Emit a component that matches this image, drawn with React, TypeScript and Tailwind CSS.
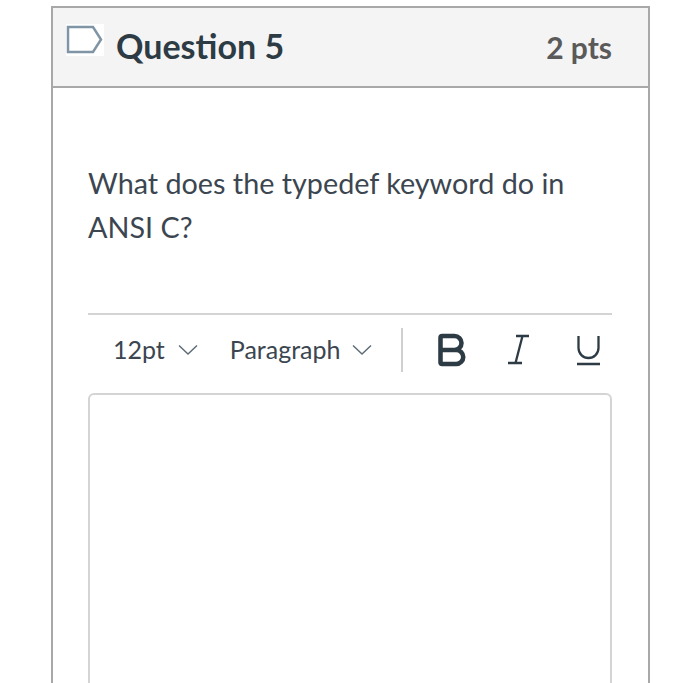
import { Bold } from "lucide-react";

function FlagIcon() {
  return (
    <svg width="38" height="32" viewBox="0 0 38 32" className="shrink-0 bg-white">
      <path
        d="M2 3H27L35 15.5L27 28H2Z"
        fill="#fff"
        stroke="#7f95a6"
        strokeWidth="2.5"
      />
    </svg>
  );
}

function Chevron() {
  return (
    <svg width="20" height="12" viewBox="0 0 20 12" className="shrink-0">
      <path d="M1 1.5L10 10L19 1.5" fill="none" stroke="#5c6a75" strokeWidth="1.4" />
    </svg>
  );
}

function ItalicIcon() {
  return (
    <svg width="24" height="32" viewBox="0 0 24 32" className="shrink-0">
      <path d="M9 2H22M15.5 2L8.5 29M1 29H15" fill="none" stroke="#2d3b45" strokeWidth="2.3" />
    </svg>
  );
}

function UnderlineIcon() {
  return (
    <svg width="25" height="32" viewBox="0 0 25 32" className="shrink-0">
      <path
        d="M2.5 2V14A10 10 0 0 0 22.5 14V2M1 30H24"
        fill="none"
        stroke="#2d3b45"
        strokeWidth="2.3"
      />
    </svg>
  );
}

export default function App() {
  return (
    <div className="h-[683px] overflow-hidden bg-white pt-[6px] pl-[51px] font-['Lato',sans-serif]">
      <div className="w-[599px] h-[700px] border-2 border-b-0 border-[#a8a8a8]">
        {/* Question header */}
        <div className="h-[80px] flex items-center bg-[#f4f4f4] border-b-2 border-[#a8a8a8] pl-[13px] pr-[36px]">
          <div className="-mt-[14px]">
            <FlagIcon />
          </div>
          <h2 className="ml-[12px] pb-[4px] text-[34px] font-bold text-[#2d3b45]">
            Question 5
          </h2>
          <span className="ml-auto text-[30px] font-bold text-[#5a5a5a]">
            2 pts
          </span>
        </div>

        <div className="px-[35px]">
          {/* Question text */}
          <p className="mt-[73px] w-[500px] text-[28.75px] leading-[44px] text-[#3b4650]">
            What does the typedef keyword do in ANSI C?
          </p>

          {/* Editor toolbar */}
          <div className="mt-[64px] h-[71px] w-[524px] border-t-2 border-[#d4d4d4] flex items-center pl-[25px] text-[#3b4650]">
            <span className="text-[25px]">12pt</span>
            <div className="ml-[13px]">
              <Chevron />
            </div>
            <span className="ml-[32px] text-[25px]">Paragraph</span>
            <div className="ml-[12px]">
              <Chevron />
            </div>
            <div className="ml-[29px] h-[44px] w-[2px] bg-[#d0d0d0]" />
            <Bold className="ml-[27px] w-[42px] h-[42px] text-[#2d3b45]" strokeWidth={2.6} />
            <div className="ml-[35px]">
              <ItalicIcon />
            </div>
            <div className="ml-[45px]">
              <UnderlineIcon />
            </div>
          </div>

          {/* Answer box */}
          <div className="mt-[9px] w-[524px] h-[320px] rounded-[6px] border-2 border-[#d4d4d4]" />
        </div>
      </div>
    </div>
  );
}
